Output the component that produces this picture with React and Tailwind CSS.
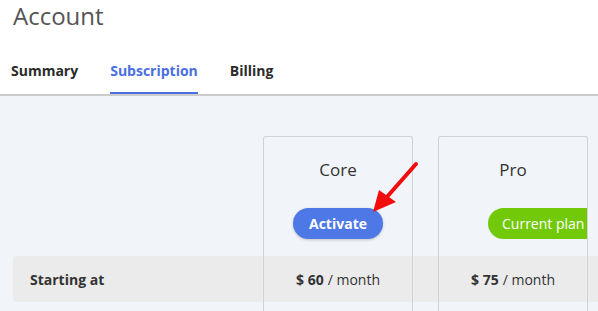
const plans = [
  { name: 'Core', price: 60, action: 'activate' },
  { name: 'Pro', price: 75, action: 'current' },
];

function Arrow() {
  return (
    <svg className="pointer-events-none absolute left-0 top-0" width="598" height="311" viewBox="0 0 598 311">
      <line x1="416" y1="164" x2="386" y2="198" stroke="#f20d0d" strokeWidth="4" strokeLinecap="round" />
      <polygon points="373,212 379,190 396,202" fill="#f20d0d" />
    </svg>
  );
}

export default function App() {
  return (
    <div className="relative h-[311px] w-[598px] overflow-hidden bg-white font-['Open_Sans',sans-serif] text-[#333]">
      <header className="bg-white">
        <h1 className="px-[13px] pt-[1px] text-[24px] leading-[30px] text-[#555]">Account</h1>
        <nav className="mt-[29px] flex gap-8 border-b-2 border-[#cccccc] px-[11px]">
          {['Summary', 'Subscription', 'Billing'].map((t) => (
            <div
              key={t}
              className={
                'border-b-2 pb-[10px] text-[14px] font-bold leading-[22px] ' +
                (t === 'Subscription' ? 'border-[#4a6fdf] text-[#4a6fdf]' : 'border-transparent text-[#2b2b2b]')
              }
            >
              {t}
            </div>
          ))}
        </nav>
      </header>

      <main className="h-full bg-[#f1f4f8] pl-[13px] pt-[40px]">
        <div className="grid grid-cols-[250px_150px_25px_150px_1fr]">
          {/* plan headers */}
          <div />
          {plans.map((p, i) => (
            <div key={p.name} className="contents">
              {i === 1 && <div />}
              <div className="h-[120px] overflow-hidden rounded-t-[3px] border border-b-0 border-[#cfd2d6] pt-[21px]">
                <div className="text-center text-[17px] leading-[24px] text-[#333]">{p.name}</div>
                {p.action === 'activate' ? (
                  <div className="mt-[26px] flex justify-center">
                    <button className="h-[31px] w-[90px] rounded-full bg-[#4d78e6] text-[14px] font-bold text-white shadow-[0_1px_3px_rgba(0,0,0,0.2)]">
                      Activate
                    </button>
                  </div>
                ) : (
                  <div className="mt-[26px] pl-[49px]">
                    <button className="h-[31px] w-[104px] whitespace-nowrap rounded-l-full bg-[#72c90a] pl-[14px] text-left text-[14px] text-white">
                      Current plan
                    </button>
                  </div>
                )}
              </div>
            </div>
          ))}
          <div />

          {/* starting at row */}
          <div className="flex h-[46px] items-center rounded-l-[4px] bg-[#ebebeb] pl-[17px] text-[14px] font-bold">Starting at</div>
          <div className="flex h-[46px] items-center justify-center border-x border-[#cfd2d6] bg-[#ebebeb] text-[14px]">
            <span className="font-bold">$ 60</span>
            <span className="ml-[4px]">/ month</span>
          </div>
          <div className="h-[46px] bg-[#ebebeb]" />
          <div className="flex h-[46px] items-center justify-center border-x border-[#cfd2d6] bg-[#ebebeb] text-[14px]">
            <span className="font-bold">$ 75</span>
            <span className="ml-[4px]">/ month</span>
          </div>
          <div className="h-[46px] bg-[#ebebeb]" />

          {/* card continuation */}
          <div />
          <div className="h-[30px] border-x border-[#cfd2d6]" />
          <div />
          <div className="h-[30px] border-x border-[#cfd2d6]" />
          <div />
        </div>
      </main>

      <Arrow />
    </div>
  );
}
